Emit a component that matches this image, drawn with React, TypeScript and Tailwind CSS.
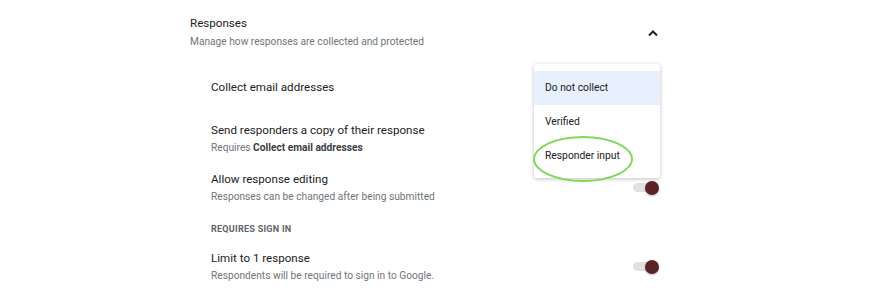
import React from 'react';

const Toggle = () => (
  <div className="relative w-[27px] h-[14px] flex items-center">
    <div className="w-[22px] h-[9px] rounded-full bg-[#e5e0e0]" />
    <div className="absolute right-[1px] top-0 w-[14px] h-[14px] rounded-full bg-[#5a2424] shadow-[0_1px_2px_rgba(0,0,0,0.25)]" />
  </div>
);

const Row = ({ title, sub, toggle }: { title: string; sub?: React.ReactNode; toggle?: boolean }) => (
  <div className="flex items-center justify-between">
    <div className="flex flex-col">
      <span className="text-[11.6px] leading-[18px] text-[#202124]">{title}</span>
      {sub && <span className="mt-[1px] text-[10.2px] leading-[16px] text-[#70757a]">{sub}</span>}
    </div>
    {toggle && <Toggle />}
  </div>
);

export default function App() {
  return (
    <div className="relative w-[880px] h-[304px] overflow-hidden bg-white" style={{ fontFamily: 'Roboto, "Liberation Sans", sans-serif' }}>
      <div className="ml-[190px] w-[470px] pt-[14px] flex flex-col">
        <div className="flex items-center justify-between">
          <div className="flex flex-col">
            <span className="text-[11.6px] leading-[18px] text-[#202124]">Responses</span>
            <span className="mt-[1px] text-[10.2px] leading-[18px] text-[#70757a]">Manage how responses are collected and protected</span>
          </div>
          <svg width="10" height="7" viewBox="0 0 10 7" className="mr-[2px] mt-[2px]">
            <path d="M1 5.5 L5 1.5 L9 5.5" fill="none" stroke="#202124" strokeWidth="2" />
          </svg>
        </div>

        <div className="pl-[21px] flex flex-col">
          <div className="mt-[27px]">
            <Row title="Collect email addresses" />
          </div>
          <div className="mt-[25px]">
            <Row
              title="Send responders a copy of their response"
              sub={<>Requires <b className="font-bold text-[#3c4043]">Collect email addresses</b></>}
            />
          </div>
          <div className="mt-[14px]">
            <Row title="Allow response editing" sub="Responses can be changed after being submitted" toggle />
          </div>
          <div className="mt-[18px] text-[9px] leading-[12px] font-bold tracking-[0.03em] text-[#5f6368]">REQUIRES SIGN IN</div>
          <div className="mt-[14px]">
            <Row title="Limit to 1 response" sub="Respondents will be required to sign in to Google." toggle />
          </div>
        </div>
      </div>

      <div className="absolute left-[534px] top-[64px] w-[126px] h-[114px] bg-white rounded-[3px] shadow-[0_1px_4px_rgba(0,0,0,0.25)] pt-[7px] flex flex-col">
        <div className="h-[34px] flex items-center px-[11px] bg-[#e8f0fe] text-[10.3px] text-[#202124]">Do not collect</div>
        <div className="h-[34px] flex items-center px-[11px] text-[10.3px] text-[#202124]">Verified</div>
        <div className="h-[34px] flex items-center px-[11px] text-[10.3px] text-[#202124]">Responder input</div>
      </div>
      <div className="absolute left-[533px] top-[136px] w-[100px] h-[46px] rounded-[50%] border-[2.5px] border-[#7ed957]" />
    </div>
  );
}
